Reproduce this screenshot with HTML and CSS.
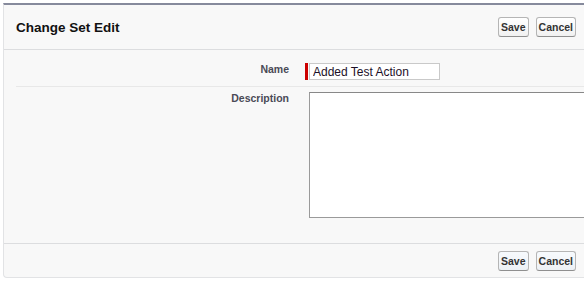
FILE: index.html
```html
<!DOCTYPE html>
<html lang="en">
<head>
  <meta charset="UTF-8">
  <meta name="viewport" content="width=device-width, initial-scale=1.0">
  <title>Change Set Edit</title>
  <link rel="stylesheet" href="styles.css">
</head>
<body>
  <div class="panel">
    <div class="panel-header">
      <h2 class="panel-title">Change Set Edit</h2>
      <div class="btn-group">
        <button class="btn">Save</button>
        <button class="btn">Cancel</button>
      </div>
    </div>

    <div class="panel-body">
      <div class="form-row">
        <label class="form-label" for="nameInput">Name</label>
        <div class="form-field required">
          <span class="required-bar"></span>
          <input id="nameInput" class="form-input" type="text" value="Added Test Action">
        </div>
      </div>
      <div class="form-row">
        <label class="form-label" for="descInput">Description</label>
        <div class="form-field">
          <textarea id="descInput" class="form-textarea"></textarea>
        </div>
      </div>
    </div>

    <div class="panel-footer">
      <div class="btn-group">
        <button class="btn btn-footer">Save</button>
        <button class="btn btn-footer">Cancel</button>
      </div>
    </div>
  </div>
</body>
</html>
```

FILE: styles.css
```css
* {
  margin: 0;
  padding: 0;
  box-sizing: border-box;
}

body {
  font-family: "Liberation Sans", Arial, sans-serif;
  background: #ffffff;
  color: #222;
  padding: 3px 0 0 3px;
  overflow: hidden;
}

.panel {
  background: #f8f8f8;
  border: 1px solid #e2e3e5;
  border-top: 2px solid #868a9c;
  border-right: 0;
  border-bottom-left-radius: 4px;
  overflow: hidden;
}

.panel-header {
  display: flex;
  align-items: center;
  justify-content: space-between;
  height: 45px;
  padding: 0 8px 0 12px;
  border-bottom: 1px solid #dcdddf;
}

.panel-title {
  font-size: 13.5px;
  font-weight: bold;
  color: #111;
  margin-top: 1px;
}

.btn-group {
  display: flex;
  gap: 7px;
}

.btn {
  font-family: "Liberation Sans", Arial, sans-serif;
  font-size: 10.5px;
  font-weight: bold;
  color: #333;
  height: 20px;
  padding: 0 2px;
  background: linear-gradient(#ffffff, #f1f1f1);
  border: 1px solid #b5b5b5;
  border-bottom-color: #8f8f8f;
  border-radius: 3px;
  cursor: pointer;
}

.btn-footer {
  background: linear-gradient(#f7fafd, #edf1f5);
}

.panel-body {
  padding: 8px 0 19px 12px;
}

.form-row {
  display: flex;
  align-items: flex-start;
  padding: 5px 0 6px;
  border-bottom: 1px solid #e8e8e8;
}

.form-row:last-child {
  border-bottom: none;
}

.form-label {
  width: 273px;
  flex-shrink: 0;
  text-align: right;
  font-size: 10.5px;
  line-height: 12px;
  font-weight: bold;
  color: #4a4a56;
}

.form-field {
  display: flex;
  margin-left: 16px;
  padding-left: 4px;
}

.form-field.required {
  padding-left: 0;
}

.required-bar {
  width: 3px;
  height: 17px;
  background: #c00;
  margin-right: 1px;
}

.form-input {
  width: 131px;
  height: 17px;
  padding: 0 3px;
  font-family: "Liberation Sans", Arial, sans-serif;
  font-size: 12px;
  color: #1c1028;
  background: #ffffff;
  border: 1px solid #c9c9c9;
  outline: none;
}

.form-textarea {
  display: block;
  width: 320px;
  height: 126px;
  background: #ffffff;
  border: 1px solid #9a9a9a;
  border-top-color: #888;
  resize: none;
  outline: none;
}

.panel-footer {
  display: flex;
  justify-content: flex-end;
  padding: 7px 8px 6px;
  border-top: 1px solid #dcdddf;
}
```
